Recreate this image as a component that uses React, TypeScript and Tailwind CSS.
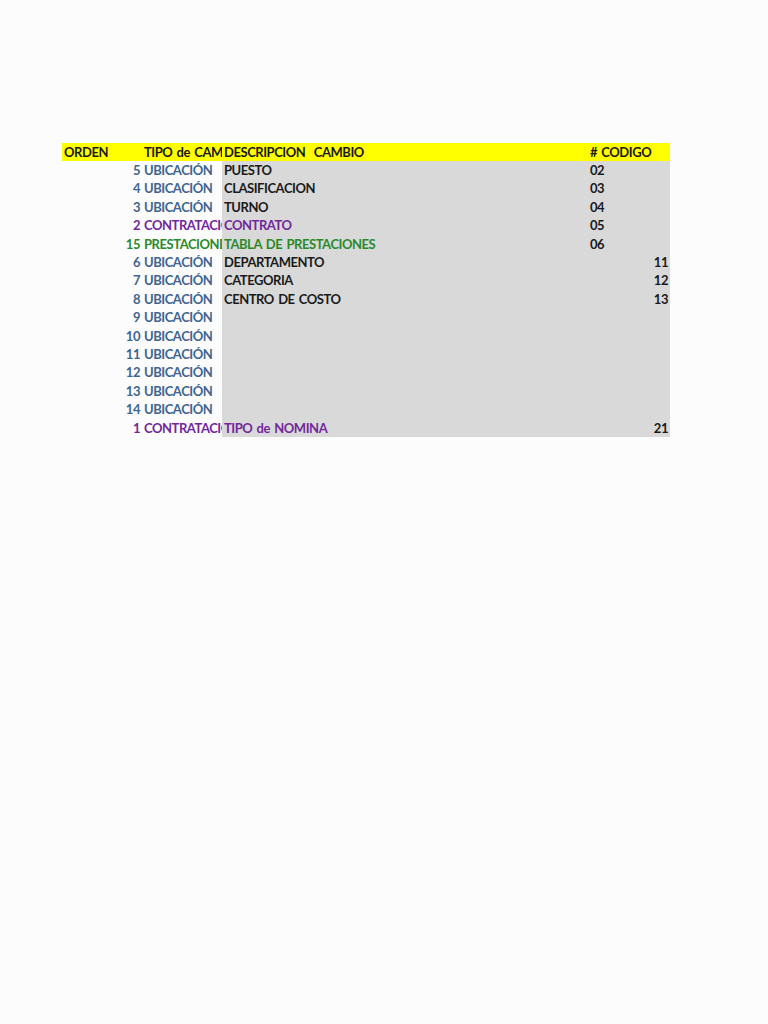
const blue = 'text-[#3f6590]'
const purple = 'text-[#72279a]'
const green = 'text-[#2a8a2a]'

type Row = {
    orden: string
    tipo: string
    desc: string
    codigo: string
    color: string
    right?: boolean
}

const rows: Row[] = [
    { orden: '5', tipo: 'UBICACIÓN', desc: 'PUESTO', codigo: '02', color: blue },
    { orden: '4', tipo: 'UBICACIÓN', desc: 'CLASIFICACION', codigo: '03', color: blue },
    { orden: '3', tipo: 'UBICACIÓN', desc: 'TURNO', codigo: '04', color: blue },
    { orden: '2', tipo: 'CONTRATACION', desc: 'CONTRATO', codigo: '05', color: purple },
    { orden: '15', tipo: 'PRESTACIONES', desc: 'TABLA DE PRESTACIONES', codigo: '06', color: green },
    { orden: '6', tipo: 'UBICACIÓN', desc: 'DEPARTAMENTO', codigo: '11', color: blue, right: true },
    { orden: '7', tipo: 'UBICACIÓN', desc: 'CATEGORIA', codigo: '12', color: blue, right: true },
    { orden: '8', tipo: 'UBICACIÓN', desc: 'CENTRO DE COSTO', codigo: '13', color: blue, right: true },
    { orden: '9', tipo: 'UBICACIÓN', desc: '', codigo: '', color: blue },
    { orden: '10', tipo: 'UBICACIÓN', desc: '', codigo: '', color: blue },
    { orden: '11', tipo: 'UBICACIÓN', desc: '', codigo: '', color: blue },
    { orden: '12', tipo: 'UBICACIÓN', desc: '', codigo: '', color: blue },
    { orden: '13', tipo: 'UBICACIÓN', desc: '', codigo: '', color: blue },
    { orden: '14', tipo: 'UBICACIÓN', desc: '', codigo: '', color: blue },
    { orden: '1', tipo: 'CONTRATACION', desc: 'TIPO de NOMINA', codigo: '21', color: purple, right: true },
]

const descColor = (r: Row) => (r.color === blue ? 'text-[#1a1a1a]' : r.color)

export default function App() {
    return (
        <div
            className="min-h-[1024px] w-[768px] bg-[#fcfcfc] pt-[143px] pl-[62px] text-[13px] font-bold tracking-[-0.45px] [word-spacing:1.5px] text-[#1a1a1a]"
            style={{ fontFamily: 'Lato, "Open Sans", sans-serif' }}
        >
            <div className="w-[608px]">
                {/* header */}
                <div className="flex h-[18.4px] items-center bg-[#ffff00] leading-[15px]">
                    <div className="w-[80px] overflow-hidden whitespace-nowrap pl-[2px]">ORDEN</div>
                    <div className="w-[80px] overflow-hidden whitespace-nowrap pl-[2px]">TIPO de CAMBIO</div>
                    <div className="w-[366px] overflow-hidden whitespace-pre pl-[2px]">DESCRIPCION  CAMBIO</div>
                    <div className="w-[82px] overflow-hidden whitespace-nowrap pl-[2px]">#&nbsp;CODIGO</div>
                </div>
                {rows.map((r, i) => (
                    <div key={i} className="flex h-[18.4px] items-center leading-[15px]">
                        <div className={`w-[80px] pr-[2px] text-right ${r.color}`}>{r.orden}</div>
                        <div className={`w-[80px] overflow-hidden whitespace-nowrap pl-[2px] ${r.color}`}>{r.tipo}</div>
                        <div className="flex h-full w-[448px] items-center bg-[#d9d9d9]">
                            <div className={`w-[366px] overflow-hidden whitespace-nowrap pl-[2px] ${descColor(r)}`}>{r.desc}</div>
                            <div className={`w-[82px] px-[2px] ${r.right ? 'text-right' : 'text-left'}`}>{r.codigo}</div>
                        </div>
                    </div>
                ))}
            </div>
        </div>
    )
}
